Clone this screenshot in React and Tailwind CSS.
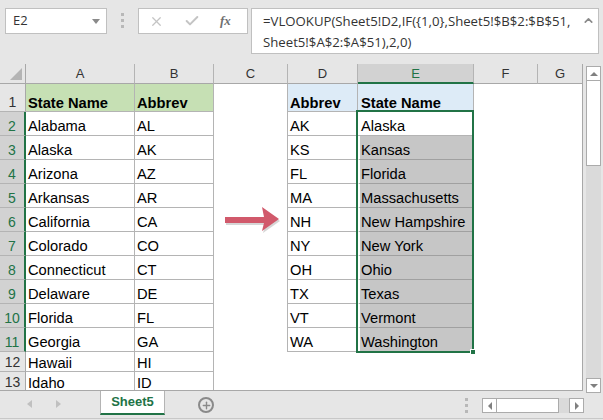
import React from 'react'
import { X, Check, Plus, ChevronUp } from 'lucide-react'

const left = [
  ['Alabama', 'AL'], ['Alaska', 'AK'], ['Arizona', 'AZ'], ['Arkansas', 'AR'], ['California', 'CA'],
  ['Colorado', 'CO'], ['Connecticut', 'CT'], ['Delaware', 'DE'], ['Florida', 'FL'], ['Georgia', 'GA'],
  ['Hawaii', 'HI'], ['Idaho', 'ID'],
]
const right = [
  ['AK', 'Alaska'], ['KS', 'Kansas'], ['FL', 'Florida'], ['MA', 'Massachusetts'], ['NH', 'New Hampshire'],
  ['NY', 'New York'], ['OH', 'Ohio'], ['TX', 'Texas'], ['VT', 'Vermont'], ['WA', 'Washington'],
]
const cols = ['A', 'B', 'C', 'D', 'E', 'F', 'G']
const cell = 'flex items-center pl-[2px] border-r border-b border-[#b4b4b4] text-black overflow-hidden whitespace-nowrap leading-[18px]'
const head = 'flex items-end pl-[2px] border-r border-b border-[#b4b4b4] text-black whitespace-nowrap font-bold leading-[16px]'

function Grip() {
  return (
    <div className="flex flex-col gap-[3px]">
      <span className="w-[3px] h-[3px] bg-[#b8b8b8]" />
      <span className="w-[3px] h-[3px] bg-[#b8b8b8]" />
      <span className="w-[3px] h-[3px] bg-[#b8b8b8]" />
    </div>
  )
}

function RowHead({ n, active }) {
  return (
    <div className={`flex items-end justify-center text-[14px] leading-[18px] border-b ${active ? 'bg-[#d2d2d2] border-[#b4b4b4] border-r-2 border-r-[#217346] text-[#217346]' : 'bg-[#e6e6e6] border-[#b4b4b4] border-r border-r-[#a8a8a8] text-[#333]'}`}>
      {n}
    </div>
  )
}

export default function App() {
  return (
    <div className="w-[603px] h-[420px] bg-[#e6e6e6] overflow-hidden font-['Liberation_Sans',sans-serif] flex flex-col">
      {/* formula bar */}
      <div className="h-[64px] flex items-start pt-[8px] pl-[5px] shrink-0">
        <div className="w-[102px] h-[26px] bg-white border border-[#c0c0c0] flex items-center justify-between pl-[7px] pr-[6px] text-[13px] text-[#333] font-['Open_Sans',sans-serif]">
          E2
          <span className="w-0 h-0 border-x-[4px] border-x-transparent border-t-[5px] border-t-[#8a8a8a]" />
        </div>
        <div className="ml-[14px] mt-[5px]"><Grip /></div>
        <div className="ml-[14px] w-[110px] h-[26px] bg-white border border-[#c0c0c0] flex items-center text-[#c4c4c4]">
          <X size={15} strokeWidth={2} className="ml-[10px]" />
          <Check size={16} strokeWidth={3} className="ml-[20px]" />
          <span className="ml-[20px] text-[13px] italic font-bold text-[#707070] font-['Liberation_Serif',serif]">fx</span>
        </div>
        <div className="ml-[3px] w-[348px] h-[46px] bg-white border border-[#c0c0c0] flex justify-between pl-[11px] pr-[3px] pt-[2px]">
          <div className="text-[13.2px] leading-[21px] text-[#333] font-['Open_Sans',sans-serif] whitespace-nowrap">
            <div>=VLOOKUP(Sheet5!D2,IF({'{'}1,0{'}'},Sheet5!$B$2:$B$51,</div>
            <div>Sheet5!$A$2:$A$51),2,0)</div>
          </div>
          <ChevronUp size={13} strokeWidth={3} className="text-[#8a8a8a] mt-[3px]" />
        </div>
      </div>

      {/* sheet */}
      <div className="h-[327px] flex shrink-0">
        <div className="relative w-[583px] h-[327px] border-r border-b border-[#a8a8a8] bg-white overflow-hidden">
          <div className="grid grid-cols-[26px_109px_79px_74px_70px_116px_64px_45px] grid-rows-[20px_28px_repeat(10,24px)_20px_20px] text-[14.7px]">
            {/* corner */}
            <div className="bg-[#e6e6e6] border-r border-b border-[#a8a8a8] flex items-end justify-end pr-[3px] pb-[3px]">
              <span className="w-0 h-0 border-l-[12px] border-l-transparent border-b-[12px] border-b-[#b4b4b4]" />
            </div>
            {cols.map(c => (
              <div key={c} className={`flex items-center justify-center pt-[1px] text-[13px] border-r ${c === 'E' ? 'bg-[#d2d2d2] border-[#b4b4b4] border-b-2 border-b-[#217346] text-[#217346]' : 'bg-[#e6e6e6] border-[#b4b4b4] border-b border-b-[#a8a8a8] text-[#333]'}`}>
                {c}
              </div>
            ))}

            {/* row 1 */}
            <RowHead n={1} />
            <div className={`${head} bg-[#c6e0b4]`}>State Name</div>
            <div className={`${head} bg-[#c6e0b4]`}>Abbrev</div>
            <div className="border-r border-[#b4b4b4]" />
            <div className={`${head} bg-[#ddebf7]`}>Abbrev</div>
            <div className={`${head} pl-[3px] bg-[#ddebf7]`}>State Name</div>
            <div />
            <div />

            {left.map((l, i) => {
              const r = right[i]
              const pad = i < 10 ? 'pt-[5px]' : 'pt-[3px]'
              return (
                <React.Fragment key={l[0]}>
                  <RowHead n={i + 2} active={i < 10} />
                  <div className={`${cell} ${pad}`}>{l[0]}</div>
                  <div className={`${cell} ${pad}`}>{l[1]}</div>
                  <div className={r ? 'border-r border-[#b4b4b4]' : ''} />
                  {r ? <div className={`${cell} ${pad}`}>{r[0]}</div> : <div />}
                  {r ? (
                    i > 0
                      ? <div className="flex items-center pt-[5px] pl-[1px] border-b border-b-[#a0a0a0] border-x-2 border-x-white bg-[#c6c6c6] text-black whitespace-nowrap overflow-hidden leading-[18px]">{r[1]}</div>
                      : <div className={`${cell} pl-[3px] ${pad}`}>{r[1]}</div>
                  ) : <div />}
                  <div />
                  <div />
                </React.Fragment>
              )
            })}
          </div>

          {/* selection outline */}
          <div className="absolute left-[356px] top-[46px] w-[118px] h-[243px] border-2 border-[#217346] pointer-events-none" />
          <div className="absolute left-[470px] top-[285px] w-[4px] h-[4px] bg-[#217346] border border-white box-content" />

          {/* arrow */}
          <svg className="absolute left-[224px] top-[142px]" width="58" height="30" viewBox="0 0 58 30">
            <path d="M2 13 L41 13 L39 3 L56 15 L39 27 L41 19 L2 19 Z" fill="#8a8a8a" opacity="0.35" />
            <path d="M1 11 L40 11 L38 1 L55 13 L38 25 L40 17 L1 17 Z" fill="#d1596b" />
          </svg>
        </div>

        {/* vertical scrollbar */}
        <div className="ml-[3px] w-[15px] h-[327px] mt-[2px] bg-[#dadada] flex flex-col justify-between">
          <div>
            <div className="h-[15px] bg-white border border-[#ababab] flex items-center justify-center">
              <span className="w-0 h-0 border-x-[4px] border-x-transparent border-b-[4px] border-b-[#808080]" />
            </div>
            <div className="h-[85px] bg-white border-x border-b border-[#ababab]" />
          </div>
          <div className="h-[15px] bg-white border border-[#ababab] flex items-center justify-center">
            <span className="w-0 h-0 border-x-[4px] border-x-transparent border-t-[4px] border-t-[#808080]" />
          </div>
        </div>
      </div>

      {/* sheet tabs */}
      <div className="h-[28px] flex items-start shrink-0 border-b border-[#c8c8c8]">
        <div className="w-[100px] h-[26px] flex items-center gap-[24px] pl-[27px]">
          <span className="w-0 h-0 border-y-[4px] border-y-transparent border-r-[5px] border-r-[#c0c0c0]" />
          <span className="w-0 h-0 border-y-[4px] border-y-transparent border-l-[5px] border-l-[#c0c0c0]" />
        </div>
        <div className="w-[65px] h-[25px] -mt-[1px] pt-[1px] bg-white border-x border-[#b4b4b4] border-b-2 border-b-[#217346] flex items-center justify-center text-[13px] font-bold text-[#217346]">
          Sheet5
        </div>
        <div className="ml-[33px] mt-[6px] w-[16px] h-[16px] rounded-full border-2 border-[#8a8a8a] flex items-center justify-center text-[#8a8a8a]">
          <Plus size={11} strokeWidth={3} />
        </div>
        <div className="ml-[251px] mt-[7px]"><Grip /></div>
        <div className="ml-[14px] mt-[7px] w-[102px] h-[15px] bg-[#dadada] flex">
          <div className="w-[15px] h-[15px] bg-white border border-[#ababab] flex items-center justify-center">
            <span className="w-0 h-0 border-y-[4px] border-y-transparent border-r-[4px] border-r-[#808080]" />
          </div>
          <div className="w-[62px] h-[15px] bg-white border-y border-r border-[#ababab]" />
          <div className="ml-auto w-[15px] h-[15px] bg-white border border-[#ababab] flex items-center justify-center">
            <span className="w-0 h-0 border-y-[4px] border-y-transparent border-l-[4px] border-l-[#808080]" />
          </div>
        </div>
      </div>
    </div>
  )
}
